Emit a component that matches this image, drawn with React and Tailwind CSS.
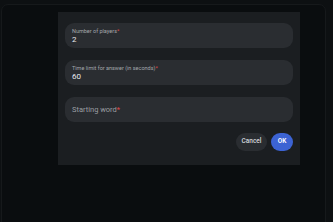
const Field = ({ label, value }) => (
  <div className="h-[25px] rounded-[9px] bg-[#2a2d31] px-[7px] flex flex-col justify-center">
    {value ? (
      <>
        <span className="text-[5.5px] leading-[7px] text-[#a3a7ac]">
          {label}
          <span className="text-[#e0484a]">*</span>
        </span>
        <span className="text-[8px] leading-[9px] text-[#e8eaed]">{value}</span>
      </>
    ) : (
      <span className="text-[7.5px] leading-[9px] text-[#9a9ea3]">
        {label}
        <span className="text-[#e0484a]">*</span>
      </span>
    )}
  </div>
);

export default function App() {
  return (
    <div
      className="relative w-[333px] h-[222px] bg-[#0d1012] overflow-hidden"
      style={{ fontFamily: 'Roboto, "Noto Sans", sans-serif' }}
    >
      <div className="absolute left-[1px] top-[4px] w-[325px] h-[230px] rounded-[7px] border border-[#16191b] bg-[#0a0d0f]" />
      <div className="absolute left-[58px] top-[12px] w-[242px] h-[153px] bg-[#1b1e21] px-[7px] pt-[11px] flex flex-col gap-[12px]">
        <Field label="Number of players" value="2" />
        <Field label="Time limit for answer (in seconds)" value="60" />
        <Field label="Starting word" />
        <div className="flex justify-end gap-[4px] -mt-[1px]">
          <button className="h-[18px] w-[31px] rounded-full bg-[#2a2d31] text-[6.5px] font-medium text-[#d4d7db]">
            Cancel
          </button>
          <button className="h-[18px] w-[22px] rounded-full bg-[#3c63d3] text-[6.5px] font-semibold text-white">
            OK
          </button>
        </div>
      </div>
    </div>
  );
}
